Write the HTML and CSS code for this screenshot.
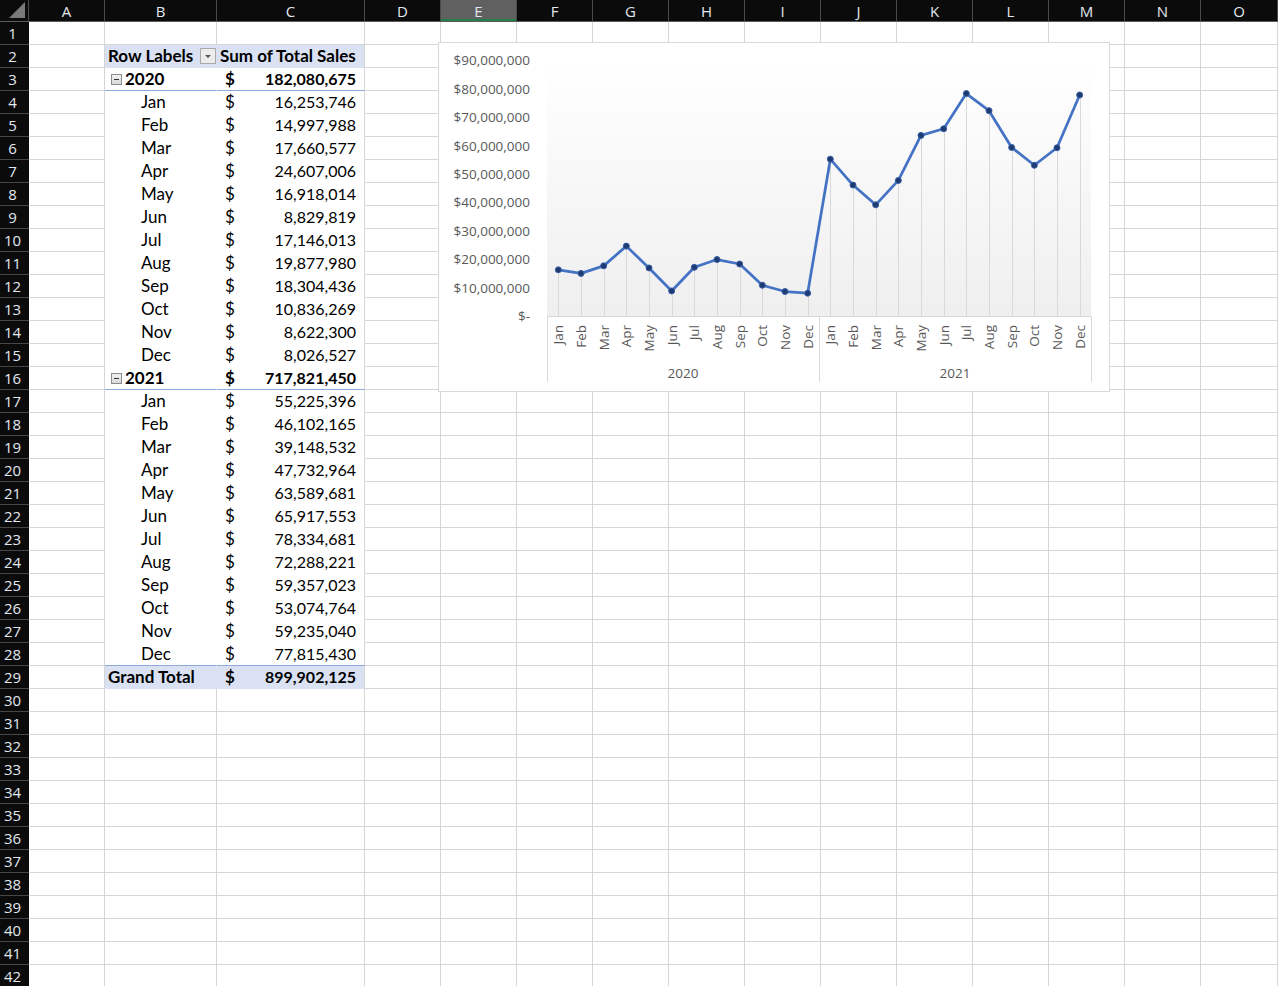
FILE: index.html
```html
<!DOCTYPE html>
<html><head><meta charset="UTF-8">
<title>Sales pivot</title>
<link rel="stylesheet" href="styles.css">
</head>
<body>

<div class="workbook">
  <div id="sheet" class="sheet"></div>
  <div class="chart">
    <svg id="chartSvg" class="chartSvg" width="670" height="348" viewBox="0 0 670 348"></svg>
  </div>
</div>

<script>

// pivot table data: 2020 and 2021 monthly sales
const months = ['Jan', 'Feb', 'Mar', 'Apr', 'May', 'Jun', 'Jul', 'Aug', 'Sep', 'Oct', 'Nov', 'Dec'];
const sales2020 = [16253746, 14997988, 17660577, 24607006, 16918014, 8829819, 17146013, 19877980, 18304436, 10836269, 8622300, 8026527];
const sales2021 = [55225396, 46102165, 39148532, 47732964, 63589681, 65917553, 78334681, 72288221, 59357023, 53074764, 59235040, 77815430];
const columns = ['A', 'B', 'C', 'D', 'E', 'F', 'G', 'H', 'I', 'J', 'K', 'L', 'M', 'N', 'O'];

const fmt = (n) => n.toLocaleString('en-US');

// which row of the sheet holds which pivot line
const pivotRows = {};
pivotRows[2] = { kind: 'head' };
pivotRows[3] = { kind: 'year', label: '2020', value: 182080675 };
months.forEach((m, i) => { pivotRows[4 + i] = { kind: 'month', label: m, value: sales2020[i] }; });
pivotRows[16] = { kind: 'year', label: '2021', value: 717821450 };
months.forEach((m, i) => { pivotRows[17 + i] = { kind: 'month', label: m, value: sales2021[i] }; });
pivotRows[28].last = true;
pivotRows[29] = { kind: 'total', label: 'Grand Total', value: 899902125 };

const makeCell = (className, text) => {
  const div = document.createElement('div');
  div.className = className;
  if (text !== undefined) {
    div.textContent = text;
  }
  return div;
};

const buildSheet = () => {
  const sheet = document.getElementById('sheet');
  sheet.appendChild(makeCell('corner'));
  columns.forEach((c) => {
    sheet.appendChild(makeCell(c === 'E' ? 'colhead active' : 'colhead', c));
  });

  for (let r = 1; r <= 42; r++) {
    sheet.appendChild(makeCell('rowhead', String(r)));
    const p = pivotRows[r];
    columns.forEach((c) => {
      if (p && (c === 'B' || c === 'C')) {
        sheet.appendChild(pivotCell(p, c));
      } else {
        sheet.appendChild(makeCell('cell'));
      }
    });
  }
};

const pivotCell = (p, col) => {
  let cls = 'cell pv pv-' + p.kind + (col === 'B' ? ' pv-b' : ' pv-c');
  if (p.last) {
    cls += ' pv-last';
  }
  const div = makeCell(cls);

  if (p.kind === 'head') {
    if (col === 'B') {
      div.appendChild(makeCell('label', 'Row Labels'));
      div.appendChild(makeCell('dropdown'));
    } else {
      div.textContent = 'Sum of Total Sales';
    }
    return div;
  }

  if (col === 'B') {
    if (p.kind === 'year') {
      div.appendChild(makeCell('toggle'));
    }
    div.appendChild(makeCell('label', p.label));
  } else {
    div.appendChild(makeCell('dollar', '$'));
    div.appendChild(makeCell('amount', fmt(p.value)));
  }
  return div;
};

// chart geometry, in svg coordinates
const plotLeft = 108;
const plotRight = 652;
const axisY = 273;
const perMillion = 2.84;
const band = (plotRight - plotLeft) / 24;

const svgEl = (name, attrs, text) => {
  const el = document.createElementNS('http://www.w3.org/2000/svg', name);
  Object.keys(attrs).forEach((k) => el.setAttribute(k, attrs[k]));
  if (text !== undefined) {
    el.textContent = text;
  }
  return el;
};

const buildChart = () => {
  const svg = document.getElementById('chartSvg');

  const defs = svgEl('defs', {});
  const grad = svgEl('linearGradient', { id: 'plotFill', x1: 0, y1: 0, x2: 0, y2: 1 });
  grad.appendChild(svgEl('stop', { offset: '0', 'stop-color': '#ffffff' }));
  grad.appendChild(svgEl('stop', { offset: '1', 'stop-color': '#efefef' }));
  defs.appendChild(grad);
  svg.appendChild(defs);

  svg.appendChild(svgEl('rect', { x: plotLeft, y: 17, width: plotRight - plotLeft, height: axisY - 17, fill: 'url(#plotFill)' }));

  // value axis labels
  for (let v = 0; v <= 90; v += 10) {
    const y = axisY - v * perMillion + 5;
    const label = v === 0 ? '$-' : '$' + fmt(v * 1000000);
    svg.appendChild(svgEl('text', { x: 91, y: y, class: 'axisText', 'text-anchor': 'end' }, label));
  }

  const values = sales2020.concat(sales2021);
  const points = values.map((v, i) => [plotLeft + band * (i + 0.5), axisY - (v / 1000000) * perMillion]);

  // drop lines
  points.forEach((pt) => {
    const x = Math.round(pt[0]) + 0.5;
    svg.appendChild(svgEl('line', { x1: x, y1: pt[1], x2: x, y2: axisY, class: 'gridLine' }));
  });

  // category axis
  svg.appendChild(svgEl('line', { x1: plotLeft, y1: axisY + 0.5, x2: plotRight + 1, y2: axisY + 0.5, class: 'gridLine' }));
  [plotLeft, plotLeft + band * 12, plotRight].forEach((x) => {
    const xx = Math.round(x) + 0.5;
    svg.appendChild(svgEl('line', { x1: xx, y1: axisY, x2: xx, y2: 339, class: 'gridLine' }));
  });

  points.forEach((pt, i) => {
    const t = svgEl('text', { class: 'axisText monthText', 'text-anchor': 'end', transform: `translate(${pt[0] + 5} 282) rotate(-90)` }, months[i % 12]);
    svg.appendChild(t);
  });
  svg.appendChild(svgEl('text', { x: plotLeft + band * 6, y: 335, class: 'axisText yearText', 'text-anchor': 'middle' }, '2020'));
  svg.appendChild(svgEl('text', { x: plotLeft + band * 18, y: 335, class: 'axisText yearText', 'text-anchor': 'middle' }, '2021'));

  // the series line and its markers
  svg.appendChild(svgEl('polyline', { points: points.map((p) => p.join(',')).join(' '), class: 'series' }));
  points.forEach((pt) => {
    svg.appendChild(svgEl('circle', { cx: pt[0], cy: pt[1], r: 3, class: 'marker' }));
  });
};

const main = () => {
  buildSheet();
  buildChart();
};

main();

</script>

</body></html>
```

FILE: styles.css
```css
* {
  box-sizing: border-box;
}
body {
  margin: 0;
  overflow: hidden;
  background-color: #ffffff;
  font-family: Lato, "Liberation Sans", sans-serif;
}
.workbook {
  position: relative;
  width: 1278px;
  height: 986px;
  overflow: hidden;
}
.sheet {
  display: grid;
  grid-template-columns: 29px 76px 112px 148px repeat(11, 76px) 77px;
  grid-template-rows: 22px repeat(42, 23px);
}
.cell {
  display: flex;
  align-items: center;
  padding-left: 3px;
  padding-bottom: 1px;
  border-right: 1px solid #d6d6d6;
  border-bottom: 1px solid #d6d6d6;
  font-size: 17px;
  color: #000000;
  white-space: nowrap;
  overflow: hidden;
}
.corner {
  position: relative;
  background-color: #0b0b0b;
  border-right: 1px solid #4a4a4a;
  border-bottom: 1px solid #5c5c5c;
}
.corner::after {
  content: "";
  position: absolute;
  right: 3px;
  bottom: 3px;
  width: 16px;
  height: 16px;
  background-color: #7a7a7a;
  clip-path: polygon(100% 0, 100% 100%, 0 100%);
}
.colhead {
  display: flex;
  align-items: center;
  justify-content: center;
  background-color: #0b0b0b;
  color: #e2e8ef;
  font-family: "Open Sans", sans-serif;
  font-size: 15px;
  border-right: 1px solid #4a4a4a;
  border-bottom: 1px solid #5c5c5c;
}
.colhead.active {
  background-color: #606060;
  box-shadow: inset 0 -2px 0 #23804a;
}
.rowhead {
  display: flex;
  align-items: center;
  justify-content: center;
  padding-right: 4px;
  background-color: #0b0b0b;
  color: #e2e8ef;
  font-family: "Open Sans", sans-serif;
  font-size: 15px;
  border-bottom: 1px solid #464646;
}

/* pivot table */
.pv {
  border-bottom-color: #ffffff;
}
.pv-b {
  border-right-color: #ffffff;
}
.pv-c {
  justify-content: space-between;
  padding-left: 8px;
  padding-right: 8px;
}
.amount {
  font-size: 16px;
}
.pv-head {
  background-color: #d9e1f2;
  border-bottom-color: #d9e1f2;
  font-weight: 700;
}
.pv-head.pv-b {
  border-right-color: #d9e1f2;
}
.pv-head.pv-c {
  justify-content: flex-start;
  padding-left: 3px;
  padding-right: 3px;
}
.pv-year {
  font-weight: 700;
  border-bottom-color: #8ea9db;
  padding-left: 6px;
}
.pv-year.pv-c {
  padding-left: 8px;
  padding-right: 8px;
}
.pv-month.pv-b {
  padding-left: 36px;
}
.pv-last {
  border-bottom-color: #8ea9db;
}
.pv-total {
  background-color: #d9e1f2;
  border-bottom-color: #d9e1f2;
  font-weight: 700;
}
.pv-total.pv-b {
  border-right-color: #d9e1f2;
}
.dropdown {
  position: relative;
  margin-left: auto;
  margin-top: 1px;
  width: 16px;
  height: 16px;
  background-color: #ececec;
  border: 1px solid #a9a9a9;
}
.dropdown::after {
  content: "";
  position: absolute;
  left: 4px;
  top: 6px;
  border-left: 3px solid transparent;
  border-right: 3px solid transparent;
  border-top: 3px solid #555555;
}
.toggle {
  position: relative;
  width: 11px;
  height: 11px;
  margin-right: 3px;
  margin-top: 1px;
  background: linear-gradient(#f2f2f2, #d8d8d8);
  border: 1px solid #8c8c8c;
}
.toggle::after {
  content: "";
  position: absolute;
  left: 2px;
  top: 4px;
  width: 5px;
  height: 1px;
  background-color: #333333;
}

/* chart floating over the sheet */
.chart {
  position: absolute;
  left: 438px;
  top: 42px;
  width: 672px;
  height: 350px;
  background-color: #ffffff;
  border: 1px solid #d9d9d9;
}
.chartSvg {
  display: block;
}
.axisText {
  font-family: "Open Sans", sans-serif;
  font-size: 13.5px;
  fill: #595959;
}
.monthText {
  font-size: 13.5px;
}
.yearText {
  font-size: 13.5px;
}
.gridLine {
  stroke: #d9d9d9;
  stroke-width: 1;
}
.series {
  fill: none;
  stroke: #4472c4;
  stroke-width: 2.75;
  stroke-linejoin: round;
  stroke-linecap: round;
}
.marker {
  fill: #1f3a70;
  stroke: #3760a8;
  stroke-width: 1;
}
```
